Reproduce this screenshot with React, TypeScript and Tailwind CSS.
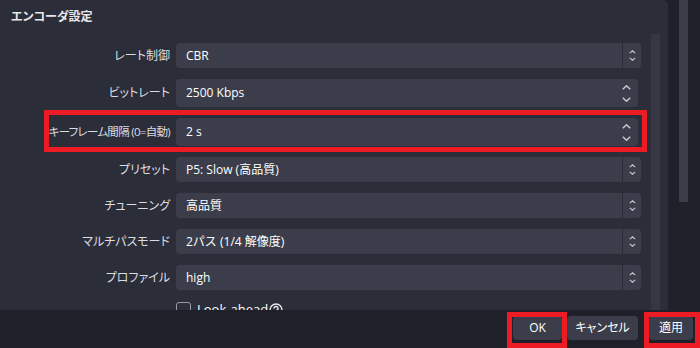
import * as React from "react";

const Chev = ({ up, w, h, sw }: { up: boolean; w: number; h: number; sw: number }) => (
  <svg width={w} height={h} viewBox={`0 0 ${w} ${h}`} className="block">
    <polyline
      points={up ? `0.8,${h - 0.8} ${w / 2},0.8 ${w - 0.8},${h - 0.8}` : `0.8,0.8 ${w / 2},${h - 0.8} ${w - 0.8},0.8`}
      fill="none"
      stroke="#c9cad0"
      strokeWidth={sw}
    />
  </svg>
);

const Label = ({ text, tight }: { text: string; tight?: boolean }) => (
  <div
    className={
      tight
        ? "w-[170px] text-right text-[11.5px] text-[#dcdde2] [font-feature-settings:'palt'] leading-none tracking-[-0.7px]"
        : "w-[170px] text-right text-[12px] text-[#dcdde2] [font-feature-settings:'palt'] leading-none"
    }
  >
    {text}
  </div>
);

const Combo = ({ label, value }: { label: string; value: string }) => (
  <div className="flex items-center shrink-0">
    <Label text={label} />
    <div className="ml-[6px] w-[465px] h-[25px] flex rounded-[4px] bg-[#3b3e4a] overflow-hidden">
      <div className="flex-1 flex items-center pl-[10px] text-[12px] text-white border-r border-[#2a2c36]">
        {value}
      </div>
      <div className="w-[18px] flex flex-col items-center justify-center gap-[3px]">
        <Chev up w={7} h={4} sw={1.1} />
        <Chev up={false} w={7} h={4} sw={1.1} />
      </div>
    </div>
  </div>
);

const Spin = ({ label, value, tight }: { label: string; value: string; tight?: boolean }) => (
  <div className="flex items-center shrink-0">
    <Label text={label} tight={tight} />
    <div className="ml-[6px] w-[462px] h-[28px] flex items-center rounded-[4px] bg-[#3b3e4a]">
      <div className="flex-1 pl-[10px] text-[12px] text-white">{value}</div>
      <div className="w-[22px] flex flex-col items-center justify-center gap-[7px] pr-[2px]">
        <Chev up w={9} h={5} sw={1.5} />
        <Chev up={false} w={9} h={5} sw={1.5} />
      </div>
    </div>
  </div>
);

export default function App() {
  return (
    <div className="w-[700px] h-[348px] bg-[#1f2029] flex flex-col overflow-hidden font-['Open_Sans','Noto_Sans_CJK_JP',sans-serif]">
      <div className="flex h-[310px] shrink-0">
        <div className="relative w-[668px] h-full bg-[#2b2d38] rounded-tr-[5px] flex overflow-hidden">
          <div className="flex-1 flex flex-col">
            <div className="h-[43px] shrink-0 pl-[11px] pt-[9px] text-[12px] font-bold text-[#e6e7ea] [font-feature-settings:'palt'] leading-[16px]">
              エンコーダ設定
            </div>
            <div className="flex flex-col gap-[11px] shrink-0">
              <Combo label="レート制御" value="CBR" />
              <Spin label="ビットレート" value="2500 Kbps" />
              <Spin label="キーフレーム間隔 (0=自動)" value="2 s" tight />
              <Combo label="プリセット" value="P5: Slow (高品質)" />
              <Combo label="チューニング" value="高品質" />
              <Combo label="マルチパスモード" value="2パス (1/4 解像度)" />
              <Combo label="プロファイル" value="high" />
              <div className="flex items-center ml-[176px] mt-[1px] shrink-0">
                <div className="w-[15px] h-[15px] rounded-[3px] border border-[#9a9ca6] bg-[#2b2d38]" />
                <span className="ml-[6px] text-[13px] text-white leading-none">Look-ahead</span>
                <svg width="14" height="14" viewBox="0 0 14 14" className="ml-[1px]">
                  <circle cx="7" cy="7" r="6" fill="none" stroke="#e6e6e6" strokeWidth="1.4" />
                  <path d="M5 5.5a2 2 0 1 1 2.6 1.9c-.5.2-.6.5-.6 1.1" fill="none" stroke="#e6e6e6" strokeWidth="1.4" />
                  <circle cx="7" cy="10.3" r="0.8" fill="#e6e6e6" />
                </svg>
              </div>
            </div>
          </div>
          <div className="w-[9px] mt-[34px] mr-[8px] bg-[#353743] shrink-0" />
          <div className="absolute left-[44px] top-[110px] w-[603px] h-[42px] border-[5px] border-[#ed1c24]" />
        </div>
        <div className="ml-[11px] w-[9px] h-[202px] bg-[#3b3d49]" />
      </div>
      <div className="relative flex-1 flex justify-end items-start pt-[6px] pr-[7px] text-[12px] text-white [font-feature-settings:'palt']">
        <div className="w-[49px] h-[24px] rounded-[4px] bg-[#3b3e4a] flex items-center justify-center">OK</div>
        <div className="ml-[5px] w-[71px] h-[24px] rounded-[4px] bg-[#3b3e4a] flex items-center justify-center">
          キャンセル
        </div>
        <div className="ml-[11px] w-[44px] h-[24px] rounded-[4px] bg-[#3b3e4a] flex items-center justify-center">適用</div>
        <div className="absolute left-[507px] top-[2px] w-[60px] h-[36px] border-[5px] border-[#ed1c24]" />
        <div className="absolute left-[644px] top-[2px] w-[56px] h-[36px] border-[5px] border-[#ed1c24]" />
      </div>
    </div>
  );
}
